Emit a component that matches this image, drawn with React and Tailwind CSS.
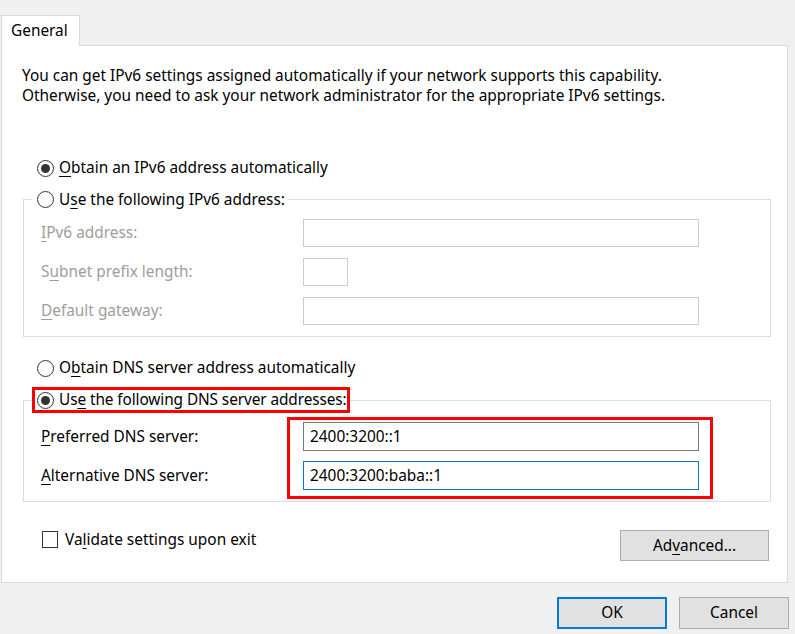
import React from 'react'

function Radio({ checked }) {
  return (
    <span className="w-[17px] h-[17px] rounded-full border border-[#333333] bg-white flex items-center justify-center shrink-0">
      {checked && <span className="w-[9px] h-[9px] rounded-full bg-[#333333]" />}
    </span>
  )
}

function Key({ children }) {
  return <span className="underline underline-offset-[3px] decoration-1">{children}</span>
}

function Field({ label, width = 'w-[396px]', height = 'h-[28px]', value, border = 'border-[#cccccc]', disabled }) {
  return (
    <div className="flex items-center">
      <div className={`w-[262px] shrink-0 ${disabled ? 'text-[#9d9d9d]' : 'text-black'}`}>{label}</div>
      <div className={`${width} ${height} border ${border} bg-white flex items-center pl-[6px]`}>{value}</div>
    </div>
  )
}

export default function App() {
  return (
    <div className="w-[795px] h-[634px] bg-[#f0f0f0] overflow-hidden text-[15.4px] leading-[20px] text-black font-['Noto_Sans',sans-serif]">
      <div className="pt-[15px] pl-[1px]">
        <div className="relative z-10 -mb-px w-[79px] h-[31px] bg-white border border-b-0 border-[#d9d9d9] pl-[9px] pb-[1px] flex items-center">
          General
        </div>

        <div className="w-[787px] h-[538px] bg-white border border-[#d9d9d9] flex flex-col pl-[21px] pr-[16px]">
          <p className="pt-[20px] -ml-px">
            You can get IPv6 settings assigned automatically if your network supports this capability.
            <br />
            Otherwise, you need to ask your network administrator for the appropriate IPv6 settings.
          </p>

          <label className="mt-[52px] pl-[14px] flex items-center gap-[5px] h-[20px]">
            <Radio checked />
            <span><Key>O</Key>btain an IPv6 address automatically</span>
          </label>

          <fieldset className="mt-[11px] border border-[#dcdcdc] pl-[8px] pb-[11px]">
            <legend className="pl-[5px] pr-[3px]">
              <span className="flex items-center gap-[5px] h-[21px]">
                <Radio />
                <span>U<Key>s</Key>e the following IPv6 address:</span>
              </span>
            </legend>
            <div className="pl-[9px] mt-[9px] flex flex-col gap-[11px]">
              <Field disabled label={<span><Key>I</Key>Pv6 address:</span>} />
              <Field disabled width="w-[45px]" label={<span>S<Key>u</Key>bnet prefix length:</span>} />
              <Field disabled label={<span><Key>D</Key>efault gateway:</span>} />
            </div>
          </fieldset>

          <label className="mt-[21px] pl-[14px] flex items-center gap-[5px] h-[20px]">
            <Radio />
            <span>O<Key>b</Key>tain DNS server address automatically</span>
          </label>

          <fieldset className="mt-[9px] border border-[#dcdcdc] pl-[8px] pb-[11px]">
            <legend className="border-[3px] border-[#ff0000] pl-[2px] pr-0">
              <span className="flex items-center gap-[5px] h-[20px] tracking-[-0.1px]">
                <Radio checked />
                <span>Us<Key>e</Key> the following DNS server addresses:</span>
              </span>
            </legend>
            <div className="relative pl-[9px] mt-[9px] flex flex-col gap-[10px]">
              <Field
                height="h-[29px]"
                border="border-[#7a7a7a]"
                value="2400:3200::1"
                label={<span><Key>P</Key>referred DNS server:</span>}
              />
              <Field
                height="h-[29px]"
                border="border-[#0078d7]"
                value="2400:3200:baba::1"
                label={<span><Key>A</Key>lternative DNS server:</span>}
              />
              <div className="absolute left-[255px] top-[-5px] w-[426px] h-[82px] border-[3px] border-[#ff0000] pointer-events-none" />
            </div>
          </fieldset>

          <div className="mt-[28px] flex items-start justify-between pr-[2px]">
            <label className="pl-[19px] flex items-center gap-[7px] h-[18px] pt-[1px]">
              <span className="w-[16px] h-[17px] border border-[#333333] bg-white shrink-0" />
              <span>Va<Key>l</Key>idate settings upon exit</span>
            </label>
            <button className="w-[149px] h-[31px] bg-[#e1e1e1] border border-[#adadad] flex items-center justify-center">
              <span>Ad<Key>v</Key>anced...</span>
            </button>
          </div>
        </div>
      </div>

      <div className="mt-[14px] pr-[6px] flex justify-end gap-[12px]">
        <button className="w-[110px] h-[32px] bg-[#e1e1e1] border-2 border-[#0078d7] flex items-center justify-center">OK</button>
        <button className="w-[110px] h-[32px] bg-[#e1e1e1] border border-[#adadad] flex items-center justify-center">Cancel</button>
      </div>
    </div>
  )
}
